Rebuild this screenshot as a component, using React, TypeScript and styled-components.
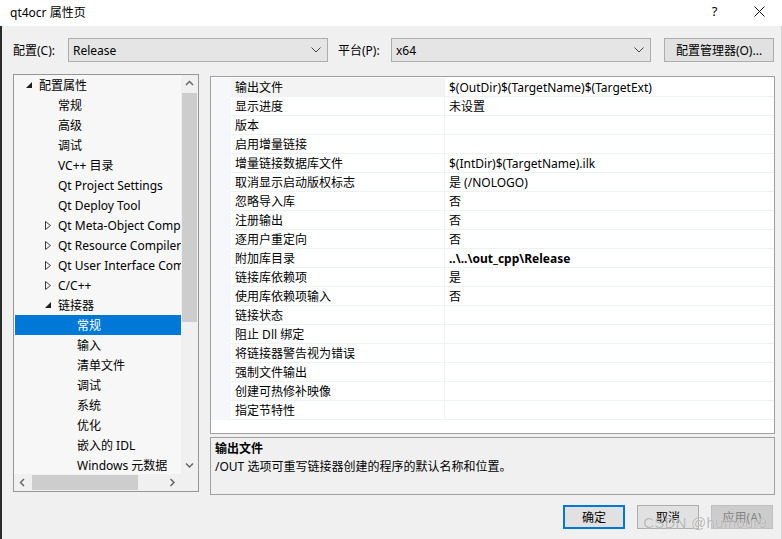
import React from 'react';
import styled, { createGlobalStyle, css } from 'styled-components';

const Global = createGlobalStyle`
  html, body { margin: 0; padding: 0; width: 782px; height: 539px; overflow: hidden; background: #f0f0f0; }
  body { font-family: "Segoe UI", "Noto Sans", "Noto Sans CJK SC", sans-serif; font-size: 12px; color: #000; }
  * { box-sizing: border-box; }
`;

const Window = styled.div`
  width: 782px;
  height: 539px;
  display: flex;
  flex-direction: column;
  position: relative;
`;

const TitleBar = styled.div`
  height: 26px;
  background: #ffffff;
  display: flex;
  align-items: center;
  padding-left: 10px;
  flex: none;
`;

const TitleText = styled.span`
  font-size: 12px;
  line-height: 26px;
`;

const TitleControls = styled.div`
  margin-left: auto;
  display: flex;
  align-items: center;
  height: 26px;
`;

const HelpGlyph = styled.span`
  font-size: 13px;
  width: 45px;
  text-align: center;
  margin-top: -4px;
`;

const CloseBox = styled.div`
  width: 45px;
  height: 26px;
  display: flex;
  align-items: center;
  justify-content: center;
  margin-top: -4px;
`;

const Body = styled.div`
  flex: 1;
  border-left: 2px solid #2b2b2b;
  border-right: 1px solid #d4d4d4;
  padding: 12px 6px 0 11px;
  display: flex;
  flex-direction: column;
`;

const ConfigRow = styled.div`
  display: flex;
  align-items: center;
  height: 24px;
`;

const FieldLabel = styled.span<{ $w: number; $ml?: number }>`
  width: ${p => p.$w}px;
  margin-left: ${p => p.$ml ?? 0}px;
  white-space: nowrap;
`;

const Combo = styled.div<{ $w: number }>`
  width: ${p => p.$w}px;
  height: 24px;
  border: 1px solid #adadad;
  background: #e5e5e5;
  display: flex;
  align-items: center;
  padding: 0 6px 0 4px;
`;

const ComboText = styled.span`
  flex: 1;
`;

const Button = styled.button<{ $default?: boolean; $disabled?: boolean; $w?: number; $ml?: number }>`
  width: ${p => p.$w ?? 62}px;
  height: 24px;
  margin-left: ${p => p.$ml ?? 0}px;
  border: 1px solid #adadad;
  background: #e1e1e1;
  font: inherit;
  color: #000;
  padding: 0;
  display: flex;
  align-items: center;
  justify-content: center;
  ${p => p.$default && css`border: 2px solid #0078d7;`}
  ${p => p.$disabled && css`background: #cccccc; border-color: #bfbfbf; color: #838383;`}
`;

const Main = styled.div`
  display: flex;
  margin-top: 12px;
  height: 421px;
  gap: 11px;
`;

const Tree = styled.div`
  width: 186px;
  height: 418px;
  border: 1px solid #969696;
  background: #f7f7f7;
  display: grid;
  grid-template-columns: 1fr 17px;
  grid-template-rows: 1fr 17px;
  overflow: hidden;
`;

const TreeList = styled.div`
  overflow: hidden;
  display: flex;
  flex-direction: column;
  min-width: 0;
`;

const TreeRow = styled.div<{ $level: number; $selected?: boolean }>`
  height: 20px;
  flex: none;
  display: flex;
  align-items: center;
  white-space: nowrap;
  padding-left: ${p => 5 + p.$level * 19}px;
  margin-left: 1px;
  ${p => p.$selected && css`background: #0078d7; color: #fff;`}
`;

const Expander = styled.span`
  width: 19px;
  flex: none;
  display: flex;
  align-items: center;
  padding-left: 6px;
`;

const VScroll = styled.div`
  background: #f0f0f0;
  display: flex;
  flex-direction: column;
`;

const ScrollBtn = styled.div`
  width: 17px;
  height: 17px;
  flex: none;
  display: flex;
  align-items: center;
  justify-content: center;
`;

const VTrack = styled.div`
  flex: 1;
  padding: 1px 1px 0 1px;
`;

const VThumb = styled.div`
  height: 229px;
  background: #cdcdcd;
`;

const HScroll = styled.div`
  background: #f0f0f0;
  display: flex;
`;

const HTrack = styled.div`
  flex: 1;
  padding: 1px 0 1px 1px;
`;

const HThumb = styled.div`
  width: 106px;
  height: 100%;
  background: #cdcdcd;
`;

const Corner = styled.div`
  background: #f0f0f0;
`;

const RightPane = styled.div`
  flex: 1;
  display: flex;
  flex-direction: column;
`;

const Grid = styled.div`
  margin-top: 2px;
  height: 358px;
  border: 1px solid #a0a0a0;
  background: #ffffff;
  padding-top: 1px;
`;

const GridRow = styled.div`
  display: grid;
  grid-template-columns: 20px 214px 1fr;
  height: 19px;
`;

const Gutter = styled.div`
  background: #f5f7fa;
`;

const Cell = styled.div<{ $label?: boolean; $active?: boolean; $bold?: boolean }>`
  border-bottom: 1px solid #eef1f6;
  ${p => p.$label && css`border-right: 1px solid #eef1f6;`}
  ${p => p.$active && css`background: #f3f3f3;`}
  ${p => p.$bold && css`font-weight: bold;`}
  padding-left: 4px;
  line-height: 20px;
  white-space: nowrap;
  overflow: hidden;
`;

const Desc = styled.div`
  margin-top: 3px;
  height: 58px;
  border: 1px solid #a0a0a0;
  background: #f0f0f0;
  padding: 2px 4px 0;
  line-height: 18px;
`;

const DescTitle = styled.div`
  font-weight: bold;
`;

const Footer = styled.div`
  display: flex;
  justify-content: flex-end;
  gap: 12px;
  margin-top: 10px;
  padding-right: 2px;
  position: relative;
`;

const Watermark = styled.span`
  position: absolute;
  right: 8px;
  top: 9px;
  font-family: "Liberation Sans", Arial, sans-serif;
  font-size: 15px;
  line-height: 18px;
  color: rgba(175, 175, 175, 0.9);
  text-shadow: 0 0 1px rgba(255, 255, 255, 0.9);
  pointer-events: none;
  letter-spacing: 0.2px;
`;

const Chevron = ({ dir }: { dir: 'up' | 'down' | 'left' | 'right' }) => {
  const paths: Record<string, string> = {
    down: 'M1 1.5 L4.5 5 L8 1.5',
    up: 'M1 5 L4.5 1.5 L8 5',
    left: 'M5 1 L1.5 4.5 L5 8',
    right: 'M1.5 1 L5 4.5 L1.5 8',
  };
  const horiz = dir === 'left' || dir === 'right';
  return (
    <svg width={horiz ? 7 : 9} height={horiz ? 9 : 7} viewBox={horiz ? '0 0 7 9' : '0 0 9 7'}>
      <path d={paths[dir]} fill="none" stroke="#606060" strokeWidth={1.4} />
    </svg>
  );
};

const ComboChevron = () => (
  <svg width="10" height="6" viewBox="0 0 10 6">
    <path d="M0.5 0.5 L5 5 L9.5 0.5" fill="none" stroke="#444" strokeWidth="1" />
  </svg>
);

const Expanded = () => (
  <svg width="6" height="6" viewBox="0 0 6 6">
    <path d="M6 0 L6 6 L0 6 Z" fill="#1e1e1e" />
  </svg>
);

const Collapsed = () => (
  <svg width="6" height="9" viewBox="0 0 6 9">
    <path d="M0.5 0.5 L5.5 4.5 L0.5 8.5 Z" fill="none" stroke="#3c3c3c" strokeWidth="1" />
  </svg>
);

type TreeItem = { label: string; level: number; exp?: 'open' | 'closed'; selected?: boolean };

const treeItems: TreeItem[] = [
  { label: '配置属性', level: 0, exp: 'open' },
  { label: '常规', level: 1 },
  { label: '高级', level: 1 },
  { label: '调试', level: 1 },
  { label: 'VC++ 目录', level: 1 },
  { label: 'Qt Project Settings', level: 1 },
  { label: 'Qt Deploy Tool', level: 1 },
  { label: 'Qt Meta-Object Compiler', level: 1, exp: 'closed' },
  { label: 'Qt Resource Compiler', level: 1, exp: 'closed' },
  { label: 'Qt User Interface Compiler', level: 1, exp: 'closed' },
  { label: 'C/C++', level: 1, exp: 'closed' },
  { label: '链接器', level: 1, exp: 'open' },
  { label: '常规', level: 2, selected: true },
  { label: '输入', level: 2 },
  { label: '清单文件', level: 2 },
  { label: '调试', level: 2 },
  { label: '系统', level: 2 },
  { label: '优化', level: 2 },
  { label: '嵌入的 IDL', level: 2 },
  { label: 'Windows 元数据', level: 2 },
];

type Prop = { name: string; value: string; bold?: boolean };

const props: Prop[] = [
  { name: '输出文件', value: '$(OutDir)$(TargetName)$(TargetExt)' },
  { name: '显示进度', value: '未设置' },
  { name: '版本', value: '' },
  { name: '启用增量链接', value: '' },
  { name: '增量链接数据库文件', value: '$(IntDir)$(TargetName).ilk' },
  { name: '取消显示启动版权标志', value: '是 (/NOLOGO)' },
  { name: '忽略导入库', value: '否' },
  { name: '注册输出', value: '否' },
  { name: '逐用户重定向', value: '否' },
  { name: '附加库目录', value: '..\\..\\out_cpp\\Release', bold: true },
  { name: '链接库依赖项', value: '是' },
  { name: '使用库依赖项输入', value: '否' },
  { name: '链接状态', value: '' },
  { name: '阻止 Dll 绑定', value: '' },
  { name: '将链接器警告视为错误', value: '' },
  { name: '强制文件输出', value: '' },
  { name: '创建可热修补映像', value: '' },
  { name: '指定节特性', value: '' },
];

export default function App() {
  return (
    <>
      <Global />
      <Window>
        <TitleBar>
          <TitleText>qt4ocr 属性页</TitleText>
          <TitleControls>
            <HelpGlyph>?</HelpGlyph>
            <CloseBox>
              <svg width="11" height="11" viewBox="0 0 11 11">
                <path d="M0.5 0.5 L10.5 10.5 M10.5 0.5 L0.5 10.5" stroke="#111" strokeWidth="1" />
              </svg>
            </CloseBox>
          </TitleControls>
        </TitleBar>
        <Body>
          <ConfigRow>
            <FieldLabel $w={55}>配置(C):</FieldLabel>
            <Combo $w={260}>
              <ComboText>Release</ComboText>
              <ComboChevron />
            </Combo>
            <FieldLabel $w={53} $ml={10}>平台(P):</FieldLabel>
            <Combo $w={260}>
              <ComboText>x64</ComboText>
              <ComboChevron />
            </Combo>
            <Button $w={110} $ml={13}>配置管理器(O)...</Button>
          </ConfigRow>
          <Main>
            <Tree>
              <TreeList>
                {treeItems.map((it, i) => (
                  <TreeRow key={i} $level={it.level} $selected={it.selected}>
                    <Expander>
                      {it.exp === 'open' && <Expanded />}
                      {it.exp === 'closed' && <Collapsed />}
                    </Expander>
                    <span>{it.label}</span>
                  </TreeRow>
                ))}
              </TreeList>
              <VScroll>
                <ScrollBtn><Chevron dir="up" /></ScrollBtn>
                <VTrack><VThumb /></VTrack>
                <ScrollBtn><Chevron dir="down" /></ScrollBtn>
              </VScroll>
              <HScroll>
                <ScrollBtn><Chevron dir="left" /></ScrollBtn>
                <HTrack><HThumb /></HTrack>
                <ScrollBtn><Chevron dir="right" /></ScrollBtn>
              </HScroll>
              <Corner />
            </Tree>
            <RightPane>
              <Grid>
                {props.map((p, i) => (
                  <GridRow key={i}>
                    <Gutter />
                    <Cell $label $active={i === 0}>{p.name}</Cell>
                    <Cell $bold={p.bold}>{p.value}</Cell>
                  </GridRow>
                ))}
              </Grid>
              <Desc>
                <DescTitle>输出文件</DescTitle>
                <div>/OUT 选项可重写链接器创建的程序的默认名称和位置。</div>
              </Desc>
            </RightPane>
          </Main>
          <Footer>
            <Button $default>确定</Button>
            <Button>取消</Button>
            <Button $disabled>应用(A)</Button>
            <Watermark>CSDN @humour9</Watermark>
          </Footer>
        </Body>
      </Window>
    </>
  );
}
